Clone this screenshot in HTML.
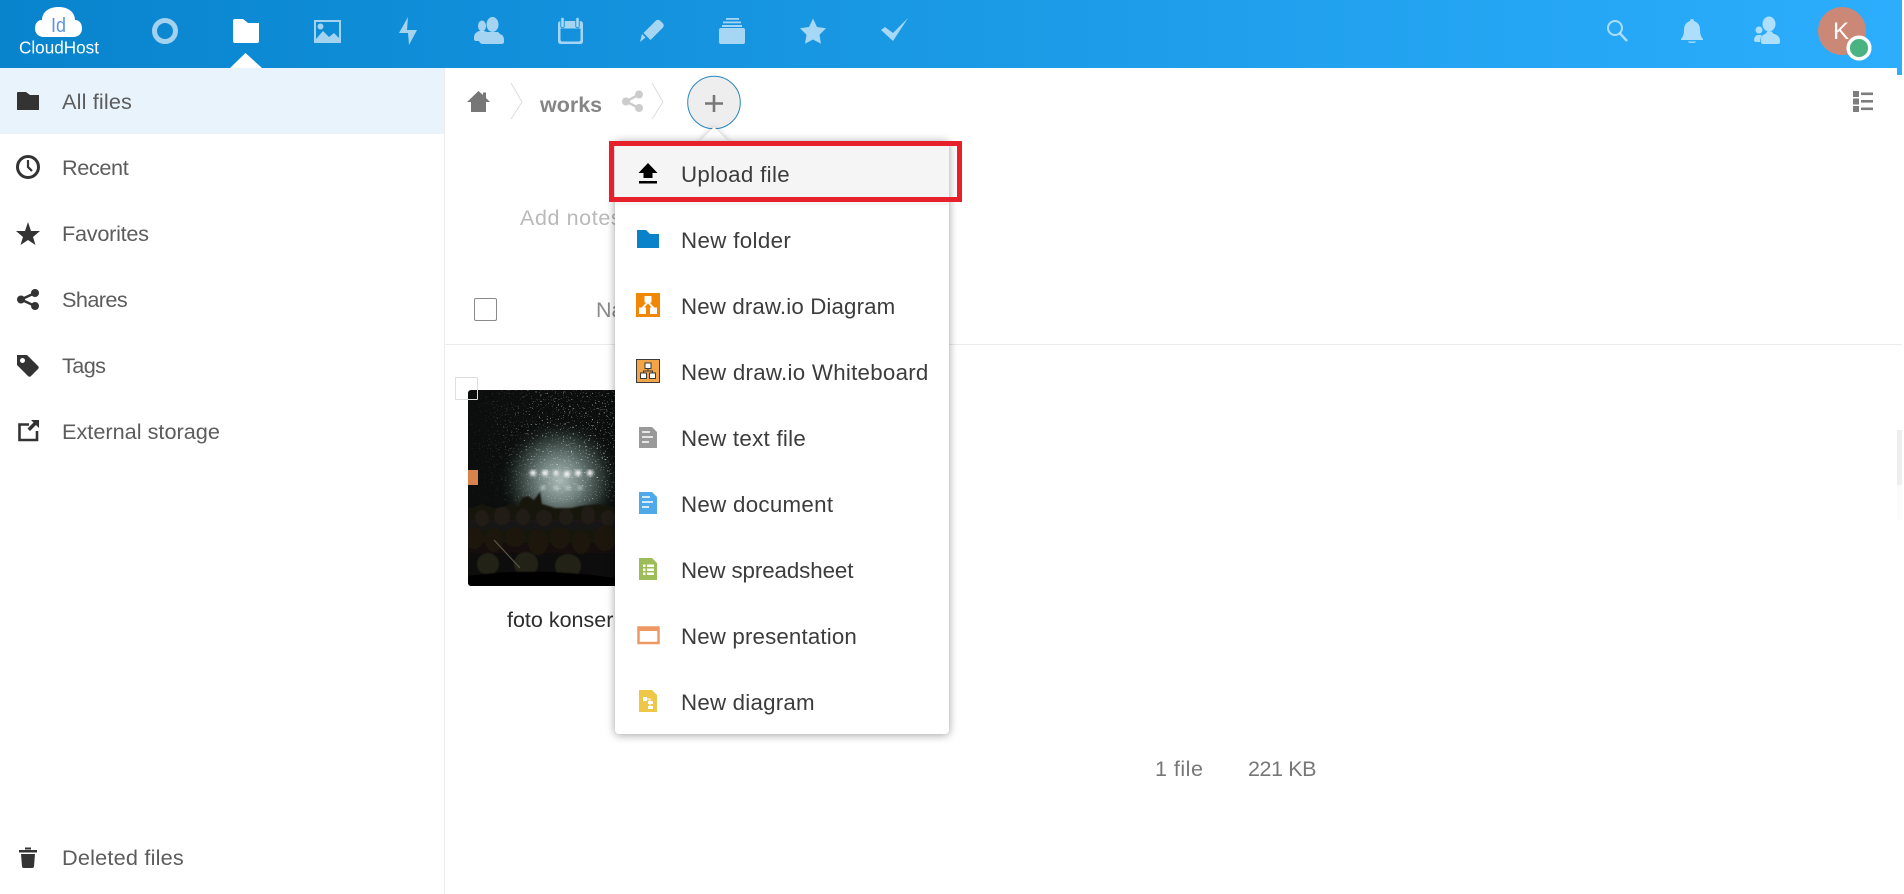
<!DOCTYPE html>
<html>
<head>
<meta charset="utf-8">
<title>CloudHost</title>
<style>
html,body{margin:0;padding:0;background:#fff;}
body{width:1904px;height:894px;overflow:hidden;position:relative;font-family:"Liberation Sans",Arial,sans-serif;}
div,svg{position:absolute;}
svg{left:0;top:0;overflow:visible;}
.t{white-space:nowrap;height:30px;line-height:30px;}
.s{left:62px;font-size:21.7px;color:#5c5c5c;}
.m{left:681px;font-size:22.3px;color:#3c3c3c;}
</style>
</head>
<body>
<!-- sidebar -->
<div style="left:0;top:68px;width:444px;height:66px;background:#e9f3fc"></div>
<div style="left:444px;top:68px;width:1px;height:826px;background:#ececec"></div>
<div class="t s" style="top:87px;letter-spacing:.15px">All files</div>
<div class="t s" style="top:153px;letter-spacing:-.4px">Recent</div>
<div class="t s" style="top:219px;letter-spacing:-.27px">Favorites</div>
<div class="t s" style="top:285px;letter-spacing:-.6px">Shares</div>
<div class="t s" style="top:351px;letter-spacing:-.6px">Tags</div>
<div class="t s" style="top:417px">External storage</div>
<div class="t s" style="top:843px;letter-spacing:.2px">Deleted files</div>
<svg width="1904" height="894">
<g fill="#333">
<path d="M17 93q0-1 1-1h8l4 3h9v15H17z"/>
<circle cx="28" cy="167" r="10.5" fill="none" stroke="#333" stroke-width="3"/>
<path d="M28 160v7l4 4" fill="none" stroke="#333" stroke-width="2.2"/>
<polygon points="28,222 31,231 40,231 33,237 35.500,245 28,240 20.500,245 23,237 16,231 25,231"/>
<circle cx="35" cy="293" r="4"/><circle cx="21" cy="299.500" r="4"/><circle cx="35" cy="306" r="4"/>
<path d="M35 293L21 299.500L35 306" fill="none" stroke="#333" stroke-width="2.500"/>
<path fill-rule="evenodd" d="M17 355h10l11 11q1.500 1.500 0 3l-7 7q-1.500 1.500-3 0L17 365zM22.500 358a2.500 2.500 0 1 0 .01 0z"/>
<path d="M29 424.500H19.500V440H37V431" fill="none" stroke="#333" stroke-width="2.600"/>
<path d="M31 420h8v8l-3-3-6 6-2.500-2.500 6-6z"/>
<path d="M19 850h18v2.500H19zM25 847.500h6v2h-6zM21 854h14l-1 12.500q-.2 1.500-2 1.500h-8q-1.800 0-2-1.500z"/>
</g>
</svg>

<!-- breadcrumb -->
<svg width="1904" height="894">
<path d="M467 102L478.500 91L483 95V92.500H486V98L490 102H486V112H471V102z" fill="#777"/>
<path d="M511 83L522 102L511 119M652 83L663 102L652 119" fill="none" stroke="#dcdcdc" stroke-width="1"/>
<g fill="#ccc"><circle cx="639" cy="94.500" r="4"/><circle cx="626" cy="101.500" r="4"/><circle cx="639" cy="108" r="4"/></g>
<path d="M639 94.500L626 101.500L639 108" fill="none" stroke="#ccc" stroke-width="2.500"/>
<circle cx="714" cy="102.500" r="26.300" fill="#eeeeee" stroke="#2a87c0" stroke-width="1"/>
<path d="M705 103.500H723M714 95V112" stroke="#777" stroke-width="2.600" fill="none"/>
<!-- view toggle -->
<g fill="#7d7d7d"><rect x="1853" y="91" width="6" height="6"/><rect x="1853" y="98.500" width="6" height="6"/><rect x="1853" y="106" width="6" height="6"/>
<rect x="1861" y="92.500" width="12" height="2.600"/><rect x="1861" y="100" width="12" height="2.600"/><rect x="1861" y="107.500" width="12" height="2.600"/></g>
</svg>
<div class="t" style="left:540px;top:90px;font-size:21.500px;font-weight:bold;color:#868686">works</div>

<!-- content -->
<div class="t" style="left:520px;top:203px;font-size:21.500px;letter-spacing:.6px;color:#b9b9b9">Add notes</div>
<div style="left:474px;top:298px;width:21px;height:21px;border:1px solid #8a8a8a;border-radius:2px"></div>
<div class="t" style="left:596px;top:295px;font-size:21.500px;color:#8a8a8a">Name</div>
<div style="left:445px;top:344px;width:1457px;height:1px;background:#ececec"></div>

<!-- photo -->
<svg width="196" height="196" viewBox="0 0 196 196" style="left:468px;top:390px">
<defs>
<clipPath id="rc"><rect width="196" height="196" rx="3"/></clipPath>
<radialGradient id="gl" gradientUnits="userSpaceOnUse" cx="92" cy="90" r="62"><stop offset="0" stop-color="#a9bab7"/><stop offset=".35" stop-color="#6f807d"/><stop offset=".7" stop-color="#29332f"/><stop offset="1" stop-color="#0c1010" stop-opacity="0"/></radialGradient>
<linearGradient id="cr" x1="0" y1="0" x2="0" y2="1"><stop offset="0" stop-color="#1d1c18"/><stop offset=".5" stop-color="#13100c"/><stop offset="1" stop-color="#080706"/></linearGradient>
<radialGradient id="fd" gradientUnits="userSpaceOnUse" cx="125" cy="45" r="125"><stop offset="0" stop-color="#fff"/><stop offset=".5" stop-color="#fff" stop-opacity=".7"/><stop offset="1" stop-color="#fff" stop-opacity=".05"/></radialGradient>
<mask id="mk"><rect width="196" height="112" fill="url(#fd)"/></mask>
<filter id="conf" x="0" y="0" width="100%" height="100%" color-interpolation-filters="sRGB">
<feTurbulence type="fractalNoise" baseFrequency="0.62" numOctaves="2" seed="11"/>
<feColorMatrix values="0 0 0 0 .92  0 0 0 0 .95  0 0 0 0 .9  10 0 0 0 -6.700"/>
</filter>
<filter id="bl"><feGaussianBlur stdDeviation="1.500"/></filter>
<filter id="bl2"><feGaussianBlur stdDeviation=".9"/></filter>
</defs>
<g clip-path="url(#rc)">
<rect width="196" height="196" fill="#0b0e0d"/>
<rect width="196" height="140" fill="url(#gl)"/>
<rect width="196" height="112" filter="url(#conf)" mask="url(#mk)" opacity=".8"/>
<rect x="0" y="80" width="10" height="15" fill="#d8834c"/>
<g fill="#fff" filter="url(#bl)"><circle cx="65" cy="83" r="3"/><circle cx="77" cy="83" r="3"/><circle cx="88" cy="83" r="2.500"/><circle cx="99" cy="84" r="3"/><circle cx="110" cy="83" r="3"/><circle cx="122" cy="83" r="3"/></g>
<g fill="#dfe6e3" filter="url(#bl)" opacity=".6"><circle cx="75" cy="98" r="2.500"/><circle cx="88" cy="98" r="2.500"/><circle cx="100" cy="98" r="2.500"/><circle cx="112" cy="98" r="2.500"/></g>
<g filter="url(#bl2)">
<rect y="118" width="196" height="78" fill="url(#cr)"/>
<path d="M0 120L14 114L28 119L42 114L50 117L54 108L60 106L66 110L72 102L74 114L94 120L112 116L130 114L147 117V130H0z" fill="#14120e"/>
<g fill="#241d15">
<ellipse cx="14" cy="128" rx="7" ry="8"/><ellipse cx="34" cy="126" rx="8" ry="9"/><ellipse cx="55" cy="127" rx="7" ry="8"/><ellipse cx="76" cy="128" rx="8" ry="8"/><ellipse cx="98" cy="127" rx="7" ry="8"/><ellipse cx="120" cy="125" rx="7" ry="9"/><ellipse cx="140" cy="128" rx="7" ry="8"/>
</g>
<g fill="#1a140f">
<ellipse cx="6" cy="148" rx="10" ry="11"/><ellipse cx="26" cy="150" rx="9" ry="12"/><ellipse cx="47" cy="147" rx="10" ry="10"/><ellipse cx="70" cy="152" rx="10" ry="13"/><ellipse cx="92" cy="148" rx="10" ry="11"/><ellipse cx="113" cy="152" rx="9" ry="12"/><ellipse cx="137" cy="148" rx="11" ry="13"/>
</g>
<g fill="#242019">
<ellipse cx="58" cy="174" rx="12" ry="12"/><ellipse cx="100" cy="176" rx="13" ry="12"/><ellipse cx="20" cy="174" rx="11" ry="11"/>
</g>
<path d="M0 186Q70 176 147 188V196H0z" fill="#060505"/>
</g>
<path d="M26 150Q40 165 52 178" stroke="#5d5548" stroke-width="1.200" fill="none"/>
</g>
</svg>
<div style="left:455px;top:377px;width:21px;height:21px;border:1px solid #dedede;border-radius:1px"></div>
<div class="t" style="left:507px;top:605px;font-size:21.500px;color:#2c2c2c">foto konser</div>

<div class="t" style="left:1155px;top:754px;font-size:21.500px;letter-spacing:.5px;color:#777">1 file</div>
<div class="t" style="left:1248px;top:754px;font-size:21.500px;letter-spacing:-.4px;color:#777">221 KB</div>
<div style="left:1897px;top:430px;width:5px;height:55px;background:#eee"></div>
<div style="left:1897px;top:485px;width:5px;height:35px;background:#fbfbfb"></div>

<!-- header -->
<div style="left:0;top:0;width:1902px;height:68px;background:linear-gradient(90deg,#0884cd,#2caefd)"></div>
<div style="left:1897px;top:68px;width:5px;height:7px;background:#2caefd"></div>
<svg width="1904" height="894">
<path d="M44 37C38 37 35 33 35 28.500C35 23 38 20 42 20C42 12 49 7 58.500 7C68 7 75 12 75 20C79 20 82 23 82 28.500C82 33 79 37 73 37z" fill="#fff"/>
<text x="51" y="32" font-family="Liberation Sans" font-size="20.500" fill="#5a95e5" textLength="15" lengthAdjust="spacingAndGlyphs">Id</text>
<text x="19" y="53.500" font-family="Liberation Sans" font-size="17.500" fill="#fff" textLength="80" lengthAdjust="spacingAndGlyphs">CloudHost</text>
<polygon points="245.500,53 262,68 230,68" fill="#fff"/>
<path d="M233 21q0-2 2-2h8l5 4h11v18q0 2-2 2h-22q-2 0-2-2z" fill="#fff"/>
<g fill="#fff" fill-opacity=".62">
<circle cx="165" cy="31" r="10.500" fill="none" stroke="#fff" stroke-opacity=".62" stroke-width="5"/>
<path fill-rule="evenodd" d="M314 20h27v23h-27zM316 22v17l7-8 6 6 5-4 5 5V22z"/>
<circle cx="320.500" cy="26.500" r="3"/>
<polygon points="408,17 399,33 408,33 409,45 417,30 407,30"/>
<ellipse cx="492.500" cy="24.500" rx="6" ry="7.500"/>
<ellipse cx="482" cy="26" rx="4" ry="5.500"/>
<path d="M474 37q0-4 5-6h5l3 1h11l2 2q4 1 4 6v2q0 2-3 2h-18q-3 0-4-3h-3q-2 0-2-2z"/>
<path fill-rule="evenodd" d="M561 21h19q3 0 3 3v17q0 3-3 3h-19q-3 0-3-3V24q0-3 3-3zM560.500 28.500v11q0 2 2 2h16q2 0 2-2v-11z"/>
<path d="M640 42l2-8 3.500 3.500zM643.500 33l12.500-12.500q2-1.500 4 0l3 3q1.500 2 0 4l-12.500 12.500z"/>
<path d="M719 30q0-2 2-2h22q2 0 2 2v12q0 2-2 2h-22q-2 0-2-2z"/>
<rect x="722" y="25" width="20" height="2"/><rect x="723" y="21.500" width="18" height="1.800"/><rect x="726" y="18" width="13" height="1.800"/>
<path d="M813 18.500l4 8.500 9 1.300-6.500 6.500 1.500 9-8-4.300-8 4.300 1.500-9-6.500-6.500 9-1.300z"/>
<polygon points="881,30 885,27 893,33 908,18 893,41"/>
<path d="M1692 19q2 0 2 2q6 2 6 9q0 6 3 9v1h-22v-1q3-3 3-9q0-7 6-9q0-2 2-2zM1688 41.500h8q0 1.500-4 1.500t-4-1.500z"/>
<ellipse cx="1769" cy="24" rx="6.500" ry="7.500"/>
<path d="M1762 44q-2-2-1-6q1-3 5-4.500l1-2h5l1 2q7 2 7 7v2q0 1.500-2 1.500z"/>
<circle cx="1759" cy="30" r="3.500"/>
<path d="M1754 40q0-3 3-5h4l1 1q-2 2-2 5v1h-4q-2 0-2-2z"/>
</g>
<path d="M562.500 19V26M577.500 19V26" stroke="#1a97df" stroke-width="4.500" stroke-linecap="round"/>
<path d="M562.500 19V26M577.500 19V26" stroke="#a9d9f5" stroke-width="2.500" stroke-linecap="round"/>
<circle cx="1615" cy="28" r="7" fill="none" stroke="#fff" stroke-opacity=".62" stroke-width="2"/>
<path d="M1620 33.500L1627 41" stroke="#fff" stroke-opacity=".62" stroke-width="2.400"/>
<circle cx="1842" cy="31" r="24" fill="#cc8877"/>
<text x="1841" y="39" font-family="Liberation Sans" font-size="24" fill="#fff" text-anchor="middle">K</text>
<circle cx="1859" cy="48" r="10.800" fill="#49b382" stroke="#fff" stroke-width="3.500"/>
</svg>

<!-- menu -->
<svg width="1904" height="894"><polygon points="714,127 729,142 699,142" fill="#fff" style="filter:drop-shadow(0 0 3px rgba(0,0,0,.25))"/></svg>
<div style="left:615px;top:141px;width:334px;height:593px;background:#fff;border-radius:4px;box-shadow:0 1px 9px rgba(0,0,0,.38)"></div>
<div style="left:615px;top:141px;width:334px;height:64px;background:#f5f5f5"></div>
<div style="left:609px;top:141px;width:343px;height:51px;border:5px solid #e8202c"></div>
<div class="t m" style="top:160px;letter-spacing:.33px">Upload file</div>
<div class="t m" style="top:226px;letter-spacing:.36px">New folder</div>
<div class="t m" style="top:292px;letter-spacing:.13px">New draw.io Diagram</div>
<div class="t m" style="top:358px;letter-spacing:.27px">New draw.io Whiteboard</div>
<div class="t m" style="top:424px;letter-spacing:.28px">New text file</div>
<div class="t m" style="top:490px;letter-spacing:.3px">New document</div>
<div class="t m" style="top:556px;letter-spacing:-.08px">New spreadsheet</div>
<div class="t m" style="top:622px;letter-spacing:.15px">New presentation</div>
<div class="t m" style="top:688px;letter-spacing:.22px">New diagram</div>
<svg width="1904" height="894">
<path d="M648 163L657.500 173H652.500V178H643.500V173H638.500zM639 181h18v2.500h-18z" fill="#000"/>
<path d="M637 230h9l4 4h9v14h-22z" fill="#0a82ca"/>
<rect x="636" y="293" width="24" height="24" fill="#f08705"/>
<g fill="#fff"><rect x="644.500" y="296" width="7" height="6.500"/><rect x="639" y="307.500" width="7" height="6.500"/><rect x="650" y="307.500" width="7" height="6.500"/></g>
<path d="M648 302L642.500 308M648 302L653.500 308" stroke="#fff" stroke-width="1.800"/>
<rect x="636.500" y="359.500" width="23" height="23" fill="#f2a447" stroke="#3a3a3a" stroke-width="1"/>
<g fill="#fff" stroke="#3a3a3a" stroke-width="1"><rect x="645" y="363" width="6" height="5.500"/><rect x="640.500" y="373" width="6" height="5.500"/><rect x="649.500" y="373" width="6" height="5.500"/></g>
<path d="M648 368.500V371M643.500 373V371H652.500V373" stroke="#3a3a3a" fill="none"/>
<path d="M639 427h13l5 5v16h-18z" fill="#999"/>
<path d="M642 432h8M642 437h11M642 442h7" stroke="#fff" stroke-width="1.500"/>
<path d="M639 492h13l5 5v17h-18z" fill="#4ea9e9"/>
<path d="M642 497h8M642 502h11M642 507h7" stroke="#fff" stroke-width="1.500"/>
<path d="M639 558h13l5 5v17h-18z" fill="#9cbd58"/>
<path d="M643 564.500h2.500v2.500H643zM647 564.500h7v2.500h-7zM643 568.500h2.500v2.500H643zM647 568.500h7v2.500h-7zM643 572.500h2.500v2.500H643zM647 572.500h7v2.500h-7z" fill="#fff"/>
<rect x="638.500" y="627.500" width="20" height="15.500" fill="#fff" stroke="#ee9864" stroke-width="2.500"/>
<rect x="638" y="627" width="21" height="4" fill="#ee9864"/>
<path d="M639 690h13l5 5v17h-18z" fill="#eec749"/>
<path d="M643 697h4v4h-4zM648 701h5v3h-5zM648 706h5v3h-5z" fill="#fff"/>
<path d="M647 699h3v3M650 704v3" stroke="#fff" stroke-width="1" fill="none"/>
</svg>
</body>
</html>
